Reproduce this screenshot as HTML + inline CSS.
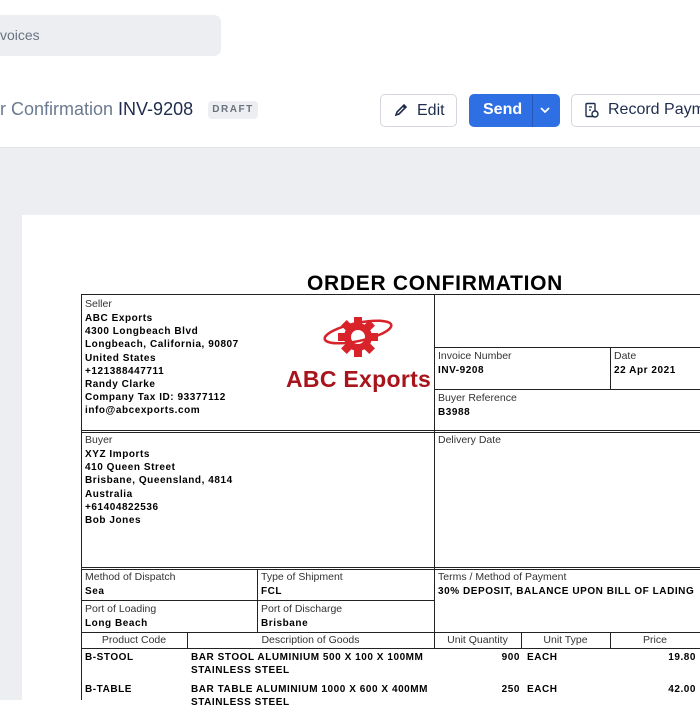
<!DOCTYPE html>
<html><head><style>
*{margin:0;padding:0;box-sizing:border-box}
body{width:700px;height:700px;overflow:hidden;background:#fff;font-family:"Liberation Sans",sans-serif;position:relative}
.a{position:absolute}
.lbl{font-size:10.5px;color:#333}
.v{font-size:10px;font-weight:bold;color:#000;letter-spacing:.55px;line-height:13.2px}
.ln{position:absolute;background:#222}
</style></head><body>
<div class="a" style="left:-10px;top:15px;width:231px;height:41px;background:#eceef2;border-radius:7px"></div>
<div class="a" style="left:0;top:27px;font-size:14px;color:#6b7280">voices</div>

<div class="a" style="left:0;top:99px;font-size:18px;color:#6b7a90;white-space:nowrap">r Confirmation <span style="color:#1f2d4d">INV-9208</span></div>
<div class="a" style="left:208px;top:101px;width:50px;height:18px;background:#eceef2;border-radius:4px;font-size:10px;font-weight:bold;letter-spacing:1.5px;color:#6b7280;text-align:center;line-height:18px">DRAFT</div>

<div class="a" style="left:380px;top:94px;width:77px;height:33px;border:1px solid #d4d7dd;border-radius:5px;font-size:16px;color:#1f2d4d;line-height:31px;padding-left:36px">Edit</div>
<svg class="a" style="left:393px;top:102px" width="16" height="16" viewBox="0 0 16 16"><path d="M3 13l1-3 7-7 2 2-7 7z M10 4l2 2" fill="none" stroke="#1f2d4d" stroke-width="1.6"/></svg>
<div class="a" style="left:469px;top:94px;width:91px;height:33px;background:#2f6fe4;border-radius:5px"></div>
<div class="a" style="left:532px;top:94px;width:1px;height:33px;background:#2558bb"></div>
<div class="a" style="left:483px;top:101px;font-size:16px;font-weight:bold;color:#fff">Send</div>
<svg class="a" style="left:539px;top:105px" width="12" height="10" viewBox="0 0 12 10"><path d="M2 3l4 4 4-4" fill="none" stroke="#fff" stroke-width="1.8"/></svg>
<div class="a" style="left:571px;top:94px;width:140px;height:33px;border:1px solid #d4d7dd;border-radius:5px"></div>
<svg class="a" style="left:584px;top:102px" width="16" height="17" viewBox="0 0 16 17"><rect x="2" y="1.5" width="9" height="13" rx="1" fill="none" stroke="#1f2d4d" stroke-width="1.4"/><circle cx="11" cy="12" r="3" fill="#fff" stroke="#1f2d4d" stroke-width="1.4"/><path d="M5 5h3M5 8h2" stroke="#1f2d4d" stroke-width="1.3"/></svg>
<div class="a" style="left:608px;top:101px;font-size:16px;color:#1f2d4d;white-space:nowrap">Record Payment</div>

<div class="a" style="left:0;top:147px;width:700px;height:553px;background:#eceef2;border-top:1px solid #e2e4e8"></div>
<div class="a" style="left:22px;top:215px;width:700px;height:500px;background:#fff"></div>

<div class="a" style="left:307px;top:272px;font-size:21px;font-weight:bold;color:#000;white-space:nowrap;letter-spacing:.7px">ORDER CONFIRMATION</div>

<div class="ln" style="left:81px;top:294px;width:620px;height:1px"></div>
<div class="ln" style="left:81px;top:294px;width:1px;height:406px"></div>
<div class="ln" style="left:434px;top:294px;width:1px;height:354px"></div>
<div class="ln" style="left:434px;top:347px;width:270px;height:1px"></div>
<div class="ln" style="left:610px;top:347px;width:1px;height:42px"></div>
<div class="ln" style="left:434px;top:389px;width:270px;height:1px"></div>
<div class="ln" style="left:81px;top:430px;width:620px;height:1px"></div>
<div class="ln" style="left:81px;top:432px;width:620px;height:1px"></div>
<div class="ln" style="left:81px;top:567px;width:620px;height:1px"></div>
<div class="ln" style="left:81px;top:569px;width:620px;height:1px"></div>
<div class="ln" style="left:81px;top:600px;width:353px;height:1px"></div>
<div class="ln" style="left:257px;top:569px;width:1px;height:63px"></div>
<div class="ln" style="left:81px;top:632px;width:620px;height:1px"></div>
<div class="ln" style="left:81px;top:648px;width:620px;height:1px"></div>
<div class="ln" style="left:187px;top:632px;width:1px;height:16px"></div>
<div class="ln" style="left:521px;top:632px;width:1px;height:16px"></div>
<div class="ln" style="left:610px;top:632px;width:1px;height:16px"></div>

<div class="a lbl" style="left:85px;top:298px">Seller</div>
<div class="a v" style="left:85px;top:312px">ABC Exports<br>4300 Longbeach Blvd<br>Longbeach, California, 90807<br>United States<br>+121388447711<br>Randy Clarke<br>Company Tax ID: 93377112<br>info@abcexports.com</div>

<svg class="a" style="left:320px;top:310px" width="75" height="55" viewBox="0 0 75 55">
<g fill="#d9232a"><circle cx="38" cy="27" r="14"/>
<g transform="translate(38 27)"><rect x="-4" y="-20" width="8" height="40"/><rect x="-4" y="-20" width="8" height="40" transform="rotate(45)"/><rect x="-4" y="-20" width="8" height="40" transform="rotate(90)"/><rect x="-4" y="-20" width="8" height="40" transform="rotate(135)"/></g></g>
<circle cx="38" cy="27" r="7" fill="#fff"/>
<ellipse cx="38" cy="22" rx="34" ry="9" fill="none" stroke="#d9232a" stroke-width="2.5" transform="rotate(-12 38 22)"/>
</svg>
<div class="a" style="left:286px;top:366px;font-size:23px;font-weight:bold;color:#a8141c;white-space:nowrap;letter-spacing:.3px">ABC Exports</div>

<div class="a lbl" style="left:438px;top:350px">Invoice Number</div>
<div class="a v" style="left:438px;top:364px">INV-9208</div>
<div class="a lbl" style="left:614px;top:350px">Date</div>
<div class="a v" style="left:614px;top:364px">22 Apr 2021</div>
<div class="a lbl" style="left:438px;top:392px">Buyer Reference</div>
<div class="a v" style="left:438px;top:406px">B3988</div>
<div class="a lbl" style="left:438px;top:434px">Delivery Date</div>

<div class="a lbl" style="left:85px;top:434px">Buyer</div>
<div class="a v" style="left:85px;top:448px">XYZ Imports<br>410 Queen Street<br>Brisbane, Queensland, 4814<br>Australia<br>+61404822536<br>Bob Jones</div>

<div class="a lbl" style="left:85px;top:571px">Method of Dispatch</div>
<div class="a v" style="left:85px;top:585px">Sea</div>
<div class="a lbl" style="left:261px;top:571px">Type of Shipment</div>
<div class="a v" style="left:261px;top:585px">FCL</div>
<div class="a lbl" style="left:438px;top:571px">Terms / Method of Payment</div>
<div class="a v" style="left:438px;top:585px;white-space:nowrap">30% DEPOSIT, BALANCE UPON BILL OF LADING</div>
<div class="a lbl" style="left:85px;top:603px">Port of Loading</div>
<div class="a v" style="left:85px;top:617px">Long Beach</div>
<div class="a lbl" style="left:261px;top:603px">Port of Discharge</div>
<div class="a v" style="left:261px;top:617px">Brisbane</div>

<div class="a lbl" style="left:81px;top:634px;width:106px;text-align:center">Product Code</div>
<div class="a lbl" style="left:187px;top:634px;width:247px;text-align:center">Description of Goods</div>
<div class="a lbl" style="left:434px;top:634px;width:87px;text-align:center">Unit Quantity</div>
<div class="a lbl" style="left:521px;top:634px;width:89px;text-align:center">Unit Type</div>
<div class="a lbl" style="left:610px;top:634px;width:90px;text-align:center">Price</div>

<div class="a v" style="left:85px;top:651px">B-STOOL</div>
<div class="a v" style="left:191px;top:651px">BAR STOOL ALUMINIUM 500 X 100 X 100MM<br>STAINLESS STEEL</div>
<div class="a v" style="left:434px;top:651px;width:86px;text-align:right">900</div>
<div class="a v" style="left:527px;top:651px">EACH</div>
<div class="a v" style="left:610px;top:651px;width:86px;text-align:right">19.80</div>
<div class="a v" style="left:85px;top:683px">B-TABLE</div>
<div class="a v" style="left:191px;top:683px">BAR TABLE ALUMINIUM 1000 X 600 X 400MM<br>STAINLESS STEEL</div>
<div class="a v" style="left:434px;top:683px;width:86px;text-align:right">250</div>
<div class="a v" style="left:527px;top:683px">EACH</div>
<div class="a v" style="left:610px;top:683px;width:86px;text-align:right">42.00</div>
</body></html>
